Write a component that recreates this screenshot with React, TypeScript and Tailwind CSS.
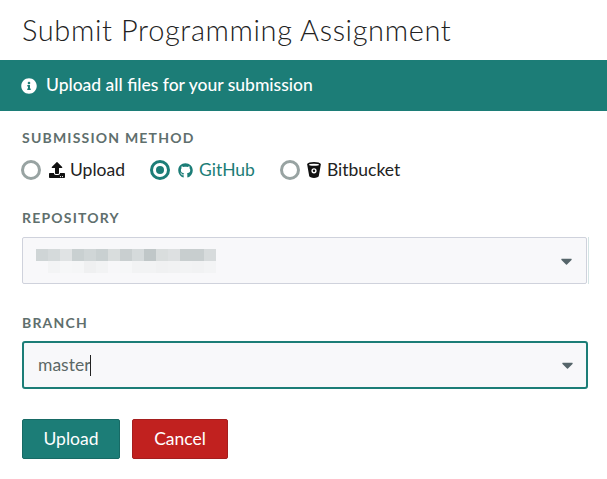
import { FaCaretDown, FaGithub, FaInfoCircle, FaUpload } from 'react-icons/fa';

const topCells = [
  'bg-[#cfd5d6]', 'bg-[#d5dadb]', 'bg-[#e0e3e4]', 'bg-[#c9d0d1]', 'bg-[#d0d6d7]',
  'bg-[#c9d0d1]', 'bg-[#d9dddd]', 'bg-[#c9cfd0]', 'bg-[#d5dadb]', 'bg-[#c0c7c8]',
  'bg-[#d9dddd]', 'bg-[#dde0e1]', 'bg-[#c8cecf]', 'bg-[#c8cecf]', 'bg-[#d7dbdc]',
];

const bottomCells = [
  'bg-[#f8f8fa]', 'bg-[#f3f4f5]', 'bg-[#f6f7f8]', 'bg-[#f5f6f7]', 'bg-[#eff0f1]',
  'bg-[#f2f3f4]', 'bg-[#f7f7f9]', 'bg-[#f6f7f8]', 'bg-[#f2f3f4]', 'bg-[#f2f3f4]',
  'bg-[#f0f1f2]', 'bg-[#f1f2f3]', 'bg-[#f2f3f4]', 'bg-[#f1f2f3]', 'bg-[#f3f4f5]',
];

function Label({ children }: { children: string }) {
  return <div className="text-[14px] leading-[18px] font-bold tracking-[1.2px] text-[#5f6f6d]">{children}</div>;
}

function Radio({ checked }: { checked?: boolean }) {
  if (checked) {
    return (
      <span className="flex h-[20px] w-[20px] shrink-0 items-center justify-center rounded-full border-[3px] border-[#1c7d77]">
        <span className="h-[8px] w-[8px] rounded-full bg-[#1c7d77]" />
      </span>
    );
  }
  return <span className="block h-[20px] w-[20px] shrink-0 rounded-full border-[3px] border-[#98a3a2]" />;
}

function BucketIcon() {
  return (
    <svg viewBox="0 0 14 16" className="h-[16px] w-[14px]">
      <path
        fill="#111"
        d="M7 0C3.6 0 .6.9.2 2.1c-.2.4 0 .8.1 1.2L2.2 14c.1.9 2.300 2 4.800 2s4.700-1.100 4.800-2l1.900-10.700c.1-.4.3-.8.1-1.200C13.400.9 10.400 0 7 0Z"
      />
      <ellipse cx="7" cy="2.700" rx="5" ry="1" fill="#fff" />
      <circle cx="7" cy="8.800" r="2.600" fill="#fff" />
      <circle cx="7" cy="8.800" r="1.200" fill="#111" />
    </svg>
  );
}

export default function App() {
  return (
    <div className="h-[479px] w-[607px] overflow-hidden bg-white font-['Lato','Liberation_Sans',sans-serif]">
      <h1 className="px-[22px] pt-[11px] text-[29px] leading-[37px] font-light tracking-[0.62px] text-[#222]">
        Submit Programming Assignment
      </h1>

      <div className="mt-[12px] flex h-[51px] items-center gap-[9px] bg-[#1c7d77] px-[21px] text-white">
        <FaInfoCircle className="h-[16px] w-[16px]" />
        <span className="text-[17.500px] font-medium">Upload all files for your submission</span>
      </div>

      <div className="px-[22px]">
        <div className="mt-[18px]">
          <Label>SUBMISSION METHOD</Label>
        </div>

        <div className="mt-[12px] -ml-px flex h-[22px] items-center text-[17.500px] text-[#222]">
          <Radio />
          <span className="ml-[8px] flex items-center gap-[5px]">
            <FaUpload className="h-[16px] w-[16px] text-[#111]" />
            Upload
          </span>
          <span className="ml-[25px]">
            <Radio checked />
          </span>
          <span className="ml-[8px] flex items-center gap-[6px] text-[#1c7d77]">
            <FaGithub className="h-[15px] w-[15px]" />
            GitHub
          </span>
          <span className="ml-[25px]">
            <Radio />
          </span>
          <span className="ml-[7px] flex items-center gap-[6px]">
            <BucketIcon />
            Bitbucket
          </span>
        </div>

        <div className="mt-[28px]">
          <Label>REPOSITORY</Label>
        </div>

        <div className="mt-[10px] flex w-[567px] gap-px">
          <div className="flex h-[47px] w-[565px] items-center justify-between rounded-[2px] border border-[#cfd2dc] bg-[#f8f8fa] pr-[13px] pl-[13px]">
            <div className="flex flex-col">
              <div className="flex">
                {topCells.map((cell, i) => (
                  <span key={i} className={`h-[12px] w-[12px] ${cell}`} />
                ))}
              </div>
              <div className="flex">
                {bottomCells.map((cell, i) => (
                  <span key={i} className={`h-[12px] w-[12px] ${cell}`} />
                ))}
              </div>
            </div>
            <FaCaretDown className="h-[18px] w-[13px] text-[#56656a]" />
          </div>
          <div className="h-[47px] w-px bg-[#d4e4e4]" />
        </div>

        <div className="mt-[30px]">
          <Label>BRANCH</Label>
        </div>

        <div className="mt-[9px] flex h-[48px] w-[566px] items-center justify-between rounded-[3px] border-2 border-[#1c7d77] bg-[#f8f8fa] pr-[12px] pl-[14px]">
          <span className="flex items-center text-[17.500px] text-[#5c6866]">
            master
            <span className="-ml-px h-[21px] w-px bg-[#222]" />
          </span>
          <FaCaretDown className="h-[18px] w-[13px] text-[#56656a]" />
        </div>

        <div className="mt-[30px] flex gap-[12px]">
          <button className="h-[40px] w-[98px] rounded-[2px] border border-[#176a65] bg-[#1c7d77] text-[17.500px] text-white">
            Upload
          </button>
          <button className="h-[40px] w-[96px] rounded-[2px] border border-[#a51e1e] bg-[#c1211f] text-[17.500px] text-white">
            Cancel
          </button>
        </div>
      </div>
    </div>
  );
}
